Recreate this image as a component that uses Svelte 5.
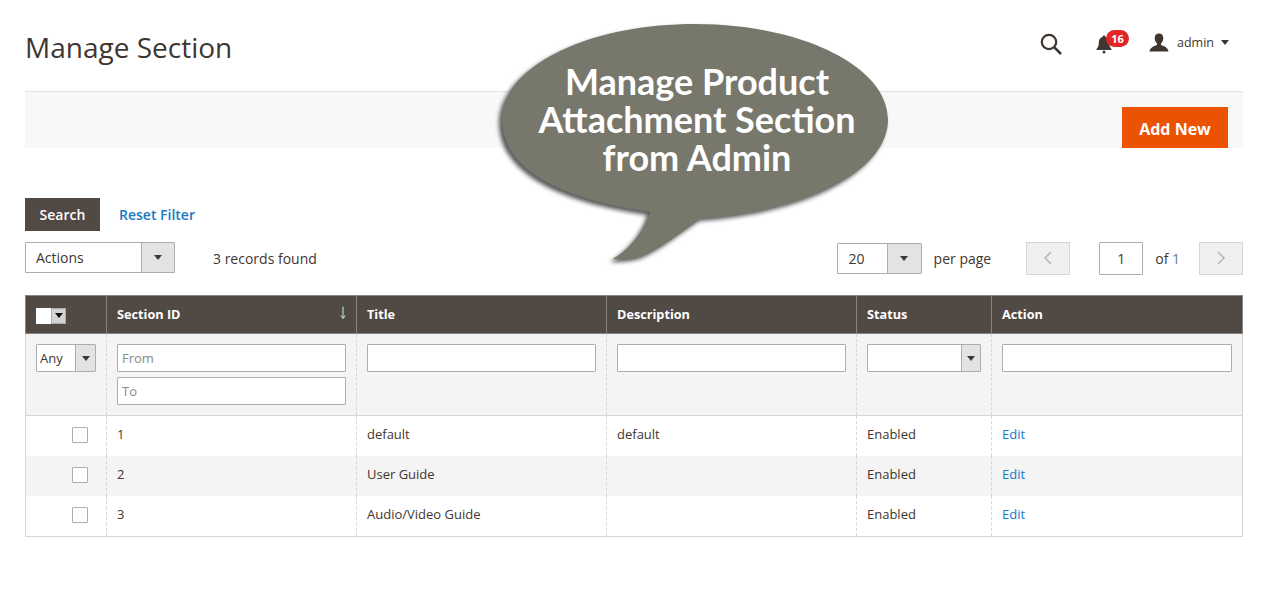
<script>
  const columns = [
    { label: 'Section ID', sort: true },
    { label: 'Title' },
    { label: 'Description' },
    { label: 'Status' },
    { label: 'Action' }
  ];

  const rows = [
    { id: 1, title: 'default', description: 'default', status: 'Enabled' },
    { id: 2, title: 'User Guide', description: '', status: 'Enabled' },
    { id: 3, title: 'Audio/Video Guide', description: '', status: 'Enabled' }
  ];
</script>

<div class="page">
  <header class="top">
    <h1>Manage Section</h1>
    <div class="tools">
      <svg class="search-icon" viewBox="0 0 24 24" width="24" height="24">
        <circle cx="10" cy="10" r="7.2" fill="none" stroke="#41362f" stroke-width="2.2"/>
        <path d="M15.4 15.4 L22 22" stroke="#41362f" stroke-width="2.6"/>
      </svg>
      <div class="bell">
        <svg viewBox="0 0 20 20" width="20" height="20">
          <path d="M10 1.5c-.9 0-1.4.6-1.4 1.4C6 3.700 4.800 5.800 4.800 8.500c0 3.500-.8 5-2.300 6.500v1h15v-1c-1.500-1.500-2.300-3-2.300-6.500 0-2.700-1.200-4.800-3.800-5.600 0-.8-.5-1.400-1.400-1.400z" fill="#41362f"/>
          <circle cx="10" cy="18" r="1.500" fill="#41362f"/>
        </svg>
        <span class="badge">16</span>
      </div>
      <div class="user">
        <svg viewBox="0 0 20 20" width="20" height="20">
          <path d="M10 .5c-2.800 0-4.300 2-4.300 4.700 0 2.200 1 4.200 2.300 5.300v1.500c-1.800 1-7 1.800-7.500 6.500h19c-.5-4.700-5.700-5.500-7.500-6.500v-1.500c1.300-1.100 2.300-3.100 2.300-5.300C14.300 2.500 12.800.5 10 .5z" fill="#41362f"/>
        </svg>
        <span class="name">admin</span>
        <span class="caret dark"></span>
      </div>
    </div>
  </header>

  <div class="actions-bar">
    <button class="add">Add New</button>
  </div>

  <div class="filter-buttons">
    <button class="search">Search</button>
    <span class="reset">Reset Filter</span>
  </div>

  <div class="toolbar">
    <div class="left">
      <div class="select actions"><span class="value">Actions</span><span class="arrow"><i class="caret"></i></span></div>
      <span class="found">3 records found</span>
    </div>
    <div class="right">
      <div class="select perpage"><span class="value">20</span><span class="arrow"><i class="caret"></i></span></div>
      <span class="per">per page</span>
      <span class="pager prev">
        <svg viewBox="0 0 10 16" width="10" height="16"><path d="M8 2 L2 8 L8 14" fill="none" stroke="#b5b5b5" stroke-width="1.500"/></svg>
      </span>
      <span class="page-input">1</span>
      <span class="of">of <span class="total">1</span></span>
      <span class="pager next">
        <svg viewBox="0 0 10 16" width="10" height="16"><path d="M2 2 L8 8 L2 14" fill="none" stroke="#b5b5b5" stroke-width="1.500"/></svg>
      </span>
    </div>
  </div>

  <table>
    <thead>
      <tr class="heads">
        <th class="col-check">
          <span class="mass"><span class="box"></span><span class="mass-arrow"><i class="caret black"></i></span></span>
        </th>
        {#each columns as col}
          <th>
            {col.label}
            {#if col.sort}
              <svg class="sort" viewBox="0 0 8 14" width="8" height="14">
                <path d="M4 0.500 V12 M1.800 9.500 L4 12.500 L6.200 9.500" fill="none" stroke="#bdf0d8" stroke-width="1"/>
              </svg>
            {/if}
          </th>
        {/each}
      </tr>
      <tr class="filters">
        <td>
          <div class="select any"><span class="value">Any</span><span class="arrow"><i class="caret"></i></span></div>
        </td>
        <td>
          <div class="stack">
            <div class="input hint">From</div>
            <div class="input hint">To</div>
          </div>
        </td>
        <td><div class="input"></div></td>
        <td><div class="input"></div></td>
        <td>
          <div class="select status"><span class="value"></span><span class="arrow"><i class="caret"></i></span></div>
        </td>
        <td><div class="input"></div></td>
      </tr>
    </thead>
    <tbody>
      {#each rows as row, i}
        <tr class:alt={i === 1}>
          <td class="cell-check"><span class="checkbox"></span></td>
          <td>{row.id}</td>
          <td>{row.title}</td>
          <td>{row.description}</td>
          <td>{row.status}</td>
          <td><span class="edit">Edit</span></td>
        </tr>
      {/each}
    </tbody>
  </table>

  <!-- callout laid over the page -->
  <div class="callout">
    <svg viewBox="0 0 420 270" width="420" height="270">
      <path class="bubble" d="M12 105.500C12 52.500 98 10 205 10s193 42.500 193 95.500c0 53-85 92-186 98.500C195 215 175 232 155 241C145 245 133 245 123 245C140 235 155 216 160 198C76 186 12 158 12 105.500z"/>
    </svg>
    <div class="callout-text">Manage Product<br />Attachment Section<br />from Admin</div>
  </div>
</div>

<style>
  :global(body) {
    margin: 0;
    background: #fff;
    font-family: "Open Sans", "Noto Sans", sans-serif;
    color: #41362f;
  }

  .page {
    position: relative;
    height: 596px;
    padding: 0 30px 0 25px;
    box-sizing: border-box;
    overflow: hidden;
  }

  .top {
    display: flex;
    justify-content: space-between;
    align-items: center;
    height: 91px;
    border-bottom: 1px solid #e3e3e3;
    padding-top: 5px;
    box-sizing: content-box;
    margin-top: -5px;
  }
  h1 {
    margin: 0;
    font-size: 28px;
    font-weight: 400;
    color: #41362f;
    position: relative;
    top: 1px;
  }

  .tools {
    display: flex;
    align-items: center;
    height: 30px;
    position: relative;
    top: -3px;
    padding-right: 14px;
  }
  .search-icon { margin-right: 32px; position: relative; top: 1px; }
  .bell { position: relative; width: 20px; height: 20px; margin-right: 34px; top: 1px; left: -1px; }
  .badge {
    position: absolute;
    left: 12px;
    top: -4px;
    width: 23px;
    height: 17px;
    border-radius: 9px;
    background: #e22626;
    color: #fff;
    font-size: 11px;
    font-weight: 700;
    line-height: 17px;
    text-align: center;
  }
  .user { display: flex; align-items: center; font-size: 12.500px; color: #41362f; }
  .name { margin-left: 8px; margin-right: 7px; }

  .caret {
    display: inline-block;
    width: 0;
    height: 0;
    border-left: 4px solid transparent;
    border-right: 4px solid transparent;
    border-top: 5px solid #41362f;
  }
  .caret.black { border-top-color: #111; }

  .actions-bar {
    display: flex;
    justify-content: flex-end;
    align-items: flex-end;
    height: 56px;
    padding-right: 15px;
    background: #f8f8f8;
  }
  .add {
    width: 106px;
    height: 41px;
    padding-top: 4px;
    border: 0;
    background: #eb5202;
    color: #fff;
    font: 700 16px "Open Sans", sans-serif;
  }

  .filter-buttons {
    display: flex;
    align-items: center;
    gap: 19px;
    margin-top: 50px;
    height: 33px;
  }
  .search {
    width: 75px;
    height: 33px;
    border: 0;
    background: #514943;
    color: #fff;
    font: 600 14px "Open Sans", sans-serif;
  }
  .reset { color: #1979c3; font-size: 14px; font-weight: 600; }

  .toolbar {
    display: flex;
    justify-content: space-between;
    align-items: center;
    margin-top: 11px;
    height: 32px;
    font-size: 14px;
    color: #41362f;
  }
  .left, .right { display: flex; align-items: center; }
  .found { margin-left: 38px; }

  .select {
    display: flex;
    box-sizing: border-box;
    border: 1px solid #adadad;
    border-radius: 1px;
    background: #fff;
    color: #41362f;
    height: 31px;
    font-size: 14px;
  }
  .select .value { flex: 1; padding-left: 10px; line-height: 29px; }
  .select .arrow {
    display: flex;
    align-items: center;
    justify-content: center;
    width: 32px;
    background: #e3e3e3;
    border-left: 1px solid #adadad;
  }
  .actions { width: 150px; margin-top: -1px; }
  .perpage { width: 85px; margin-top: 1px; }
  .perpage .value { padding-left: 11px; }
  .perpage .arrow { width: 33px; }
  .per { margin-left: 12px; margin-right: 35px; }

  .pager {
    display: flex;
    align-items: center;
    justify-content: center;
    box-sizing: border-box;
    width: 44px;
    height: 33px;
    background: #f0f0f0;
    border: 1px solid #d6d6d6;
  }
  .page-input {
    box-sizing: border-box;
    width: 44px;
    height: 33px;
    margin-left: 29px;
    border: 1px solid #adadad;
    border-radius: 1px;
    text-align: center;
    line-height: 31px;
  }
  .of { margin-left: 12px; margin-right: 19px; }
  .total { color: #5d7f9e; }

  table {
    width: 1218px;
    margin-top: 21px;
    border-collapse: collapse;
    table-layout: fixed;
    font-size: 13px;
  }
  th:nth-child(1) { width: 81px; }
  th:nth-child(2), th:nth-child(3), th:nth-child(4) { width: 250px; }
  th:nth-child(5) { width: 135px; }

  .heads th {
    height: 38px;
    padding: 0 10px 2px;
    box-sizing: border-box;
    background: #514943;
    border: 1px solid #8a837e;
    color: #fff;
    font-size: 12.700px;
    font-weight: 700;
    text-align: left;
    position: relative;
  }
  .sort {
    position: absolute;
    right: 9px;
    top: 10px;
  }

  .mass { display: flex; width: 30px; height: 16px; margin-top: 4px; }
  .box { width: 15px; background: #fff; }
  .mass-arrow {
    display: flex;
    align-items: center;
    justify-content: center;
    width: 15px;
    background: #d4d4d4;
    border: 1px solid #adadad;
    box-sizing: border-box;
  }

  .filters td {
    vertical-align: top;
    height: 82px;
    padding: 10px 10px 0;
    box-sizing: border-box;
    background: #f4f4f4;
    border: 1px dashed #d6d6d6;
    border-top: 0;
    border-bottom: 1px solid #d6d6d6;
  }
  .filters td:first-child { border-left: 1px solid #d6d6d6; }
  .filters td:last-child { border-right: 1px solid #d6d6d6; }

  .input {
    box-sizing: border-box;
    height: 28px;
    border: 1px solid #adadad;
    border-radius: 1px;
    background: #fff;
  }
  .hint { padding-left: 4px; line-height: 26px; font-size: 13px; color: #8a8a8a; }
  .stack { display: flex; flex-direction: column; gap: 5px; }

  .filters .select { height: 28px; font-size: 13px; }
  .filters .select .value { padding-left: 3px; line-height: 26px; }
  .any { width: 60px; }
  .filters .any .arrow { width: 19px; }
  .filters .status .arrow { width: 18px; }

  tbody td {
    height: 40px;
    padding: 0 10px 4px;
    box-sizing: border-box;
    font-size: 13px;
    color: #41362f;
    border-left: 1px dashed #d6d6d6;
    border-right: 1px dashed #d6d6d6;
    background: #fff;
  }
  tbody tr.alt td { background: #f4f4f4; }
  tbody td:first-child { border-left: 1px solid #d6d6d6; }
  tbody td:last-child { border-right: 1px solid #d6d6d6; }
  tbody tr:last-child td { border-bottom: 1px solid #d6d6d6; height: 41px; }

  .cell-check { padding: 0 0 2px 46px; }
  .checkbox {
    display: block;
    box-sizing: border-box;
    width: 16px;
    height: 16px;
    border: 1px solid #adadad;
    border-radius: 1px;
    background: #fff;
  }
  .edit { color: #1979c3; }

  .callout {
    position: absolute;
    left: 490px;
    top: 14px;
    width: 420px;
    height: 270px;
  }
  .bubble {
    fill: #77776b;
    filter: drop-shadow(-3px 3px 2px rgba(0, 0, 0, .65));
  }
  .callout svg { display: block; overflow: visible; }
  .callout-text {
    position: absolute;
    left: 0;
    top: 48px;
    width: 414px;
    text-align: center;
    font-family: Lato, sans-serif;
    font-weight: 700;
    font-size: 36px;
    line-height: 38px;
    color: #fff;
  }
</style>
